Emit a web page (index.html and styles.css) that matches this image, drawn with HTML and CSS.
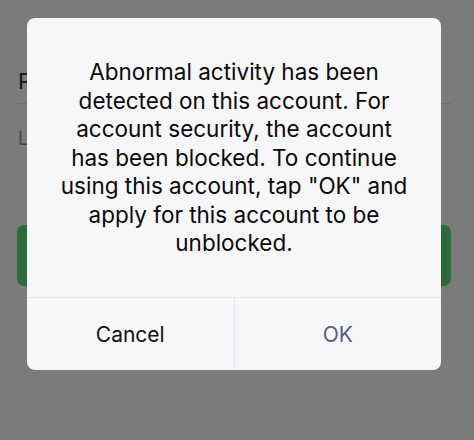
FILE: index.html
```html
<!DOCTYPE html>
<html lang="en">
<head>
    <meta charset="UTF-8">
    <meta name="viewport" content="width=device-width, initial-scale=1.0">
    <title>Account blocked</title>
    <link rel="stylesheet" href="styles.css">
</head>
<body>
    <div class="screen">
        <div class="field">Phone</div>
        <div class="field field-hint">Login</div>
        <div class="main-button"></div>
    </div>

    <!-- blocked account alert -->
    <div class="alert">
        <p class="alert-message">Abnormal activity has been detected on this account. For account security, the account has been blocked. To continue using this account, tap "OK" and apply for this account to be unblocked.</p>
        <div class="alert-actions">
            <button class="alert-button">Cancel</button>
            <button class="alert-button alert-button-ok">OK</button>
        </div>
    </div>
</body>
</html>
```

FILE: styles.css
```css
body {
    margin: 0;
    background-color: #7b7b7b;
    font-family: Inter, "Liberation Sans", Arial, sans-serif;
    height: 440px;
    overflow: hidden;
}
.screen {
    padding: 0 23px 0 18px;
}
.field {
    height: 30px;
    padding-top: 66px;
    font-size: 22px;
    line-height: 30px;
    color: #151515;
    border-bottom: 1px solid #6f6f6f;
    margin-bottom: 20px;
    padding-bottom: 7px;
}
.field-hint {
    padding-top: 0;
    border-bottom: none;
    color: #454545;
    font-size: 18px;
}
.main-button {
    margin-top: 64px;
    margin-left: -1px;
    height: 61px;
    border-radius: 7px;
    background-color: #2d6a3a;
}

.alert {
    position: absolute;
    left: 27px;
    top: 18px;
    width: 414px;
    height: 352px;
    background-color: #f7f6f9;
    border-radius: 8px;
    display: flex;
    flex-direction: column;
    overflow: hidden;
}
.alert-message {
    flex: 1;
    margin: 0;
    padding: 40px 32px 0;
    text-align: center;
    font-size: 22.5px;
    line-height: 28.5px;
    color: #0a0a0a;
}
.alert-actions {
    display: flex;
    height: 72px;
    border-top: 1px solid #e6e5e9;
}
.alert-button {
    flex: 1;
    border: none;
    background: none;
    font-family: inherit;
    font-size: 21px;
    color: #111;
    padding: 0;
    cursor: pointer;
}
.alert-button-ok {
    color: #555e80;
    border-left: 1px solid #e6e5e9;
}
```
